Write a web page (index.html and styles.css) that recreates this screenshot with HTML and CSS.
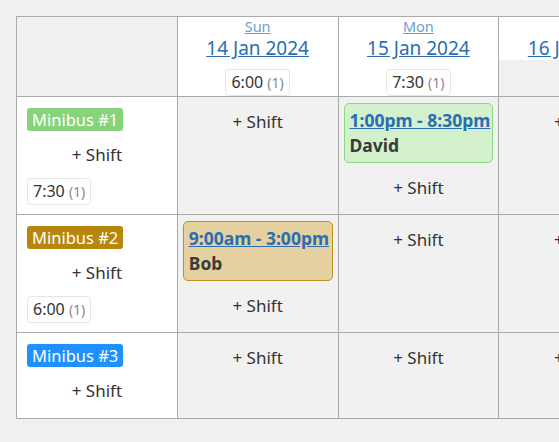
FILE: index.html
```html
<!DOCTYPE html>
<html lang="en">
<head>
    <meta charset="UTF-8">
    <meta name="viewport" content="width=device-width, initial-scale=1.0">
    <title>Roster</title>
    <link rel="stylesheet" href="styles.css">
</head>
<body>
    <div class="roster-wrap">
        <table class="roster">
            <thead>
                <tr>
                    <th class="corner"></th>
                    <th class="day">
                        <div class="day-head">
                            <a href="#" class="dow">Sun</a>
                            <a href="#" class="date">14 Jan 2024</a>
                            <span class="pill">6:00 <span class="count">(1)</span></span>
                        </div>
                    </th>
                    <th class="day">
                        <div class="day-head">
                            <a href="#" class="dow">Mon</a>
                            <a href="#" class="date">15 Jan 2024</a>
                            <span class="pill">7:30 <span class="count">(1)</span></span>
                        </div>
                    </th>
                    <th class="day">
                        <div class="day-head">
                            <a href="#" class="dow">Tue</a>
                            <a href="#" class="date">16 Jan 2024</a>
                        </div>
                    </th>
                </tr>
            </thead>
            <tbody>
                <!-- Minibus #1 -->
                <tr>
                    <td class="vehicle">
                        <span class="badge green">Minibus #1</span>
                        <button class="add-shift">+ Shift</button>
                        <span class="pill">7:30 <span class="count">(1)</span></span>
                    </td>
                    <td class="slot">
                        <button class="add-shift">+ Shift</button>
                    </td>
                    <td class="slot">
                        <div class="shift green">
                            <a href="#" class="shift-time">1:00pm - 8:30pm</a>
                            <div class="shift-who">David</div>
                        </div>
                        <button class="add-shift">+ Shift</button>
                    </td>
                    <td class="slot">
                        <button class="add-shift">+ Shift</button>
                    </td>
                </tr>
                <!-- Minibus #2 -->
                <tr>
                    <td class="vehicle">
                        <span class="badge gold">Minibus #2</span>
                        <button class="add-shift">+ Shift</button>
                        <span class="pill">6:00 <span class="count">(1)</span></span>
                    </td>
                    <td class="slot">
                        <div class="shift gold">
                            <a href="#" class="shift-time">9:00am - 3:00pm</a>
                            <div class="shift-who">Bob</div>
                        </div>
                        <button class="add-shift">+ Shift</button>
                    </td>
                    <td class="slot">
                        <button class="add-shift">+ Shift</button>
                    </td>
                    <td class="slot">
                        <button class="add-shift">+ Shift</button>
                    </td>
                </tr>
                <!-- Minibus #3 -->
                <tr>
                    <td class="vehicle">
                        <span class="badge blue">Minibus #3</span>
                        <button class="add-shift">+ Shift</button>
                    </td>
                    <td class="slot">
                        <button class="add-shift">+ Shift</button>
                    </td>
                    <td class="slot">
                        <button class="add-shift">+ Shift</button>
                    </td>
                    <td class="slot">
                        <button class="add-shift">+ Shift</button>
                    </td>
                </tr>
            </tbody>
        </table>
    </div>
</body>
</html>
```

FILE: styles.css
```css
html, body {
    margin: 0;
    padding: 0;
    overflow: hidden;
}
body {
    font-family: "Noto Sans", "Open Sans", sans-serif;
    background-color: #f0f0f0;
    color: #333;
}
.roster-wrap {
    padding: 16px;
    width: 1400px;
}
.roster {
    border-collapse: collapse;
    table-layout: fixed;
    width: 644px;
}
.roster th, .roster td {
    border: 1px solid #aaa;
    vertical-align: top;
}
.corner {
    background-color: #f0f0f0;
}
.day {
    padding: 0;
    font-weight: normal;
    background-color: #f0f0f0;
}
.day-head {
    display: flex;
    flex-direction: column;
    align-items: center;
    background-color: #fff;
    white-space: nowrap;
}
.dow {
    color: #6a9fd2;
    font-size: 14.5px;
    line-height: 19px;
}
.date {
    color: #2a6db3;
    font-size: 19px;
    line-height: 24px;
}
.pill {
    display: inline-block;
    background-color: #fff;
    border: 1px solid #e6e6e6;
    border-radius: 4px;
    padding: 0 5px;
    font-size: 16px;
    line-height: 24px;
    color: #333;
}
.day-head .pill {
    margin-top: 9px;
}
.count {
    color: #888;
    font-size: 14px;
}
.vehicle {
    background-color: #fff;
    padding: 11px 10px 8px;
}
.vehicle .add-shift {
    display: block;
    margin: 5px auto 0;
}
.vehicle .pill {
    margin-top: 4px;
    margin-bottom: 1px;
}
.badge {
    display: inline-block;
    color: #fff;
    font-size: 16.5px;
    line-height: 23px;
    padding: 0 5px;
    border-radius: 3px;
}
.badge.green {
    background-color: #87d37c;
}
.badge.gold {
    background-color: #b8860b;
}
.badge.blue {
    background-color: #1e90ff;
}
.slot {
    background-color: #f1f1f1;
    padding: 6px 5px;
    text-align: center;
}
.add-shift {
    background: none;
    border: none;
    font-family: inherit;
    font-size: 17px;
    line-height: 24px;
    padding: 7px 8px;
    color: #333;
    cursor: pointer;
}
.shift {
    text-align: left;
    border: 1px solid;
    border-radius: 5px;
    padding: 4px 1px 4px 5px;
    margin-bottom: 6px;
    font-weight: bold;
    font-size: 17.5px;
    line-height: 25px;
    white-space: nowrap;
    overflow: hidden;
}
.shift.green {
    background-color: #d3f1cc;
    border-color: #8fd683;
}
.shift.gold {
    background-color: #e5d19f;
    border-color: #c0901a;
}
.shift-time {
    color: #2a6db3;
}
.shift-who {
    color: #3a3a3a;
}
```
